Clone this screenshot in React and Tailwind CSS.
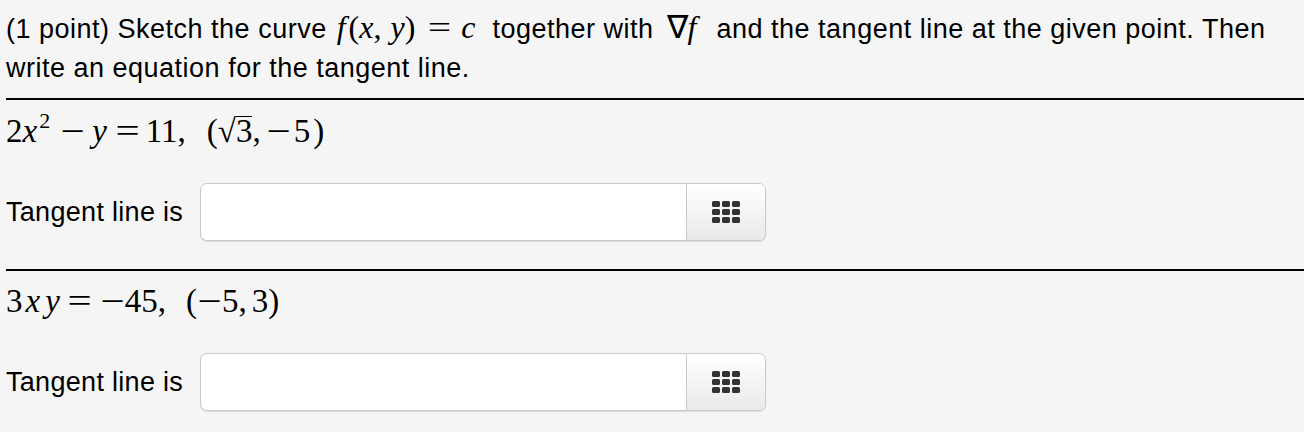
import React from 'react';

// Math bits are set in a Times-style serif, prose in a Helvetica-style sans.
const serif = "font-['Liberation_Serif','Times_New_Roman',serif] tracking-normal";

// Relation / binary operator glyphs are widened to the TeX proportions.
function Op({ children, className = '' }) {
  return (
    <span className={`inline-block w-[25px] text-center scale-x-[1.3] ${className}`}>{children}</span>
  );
}

function GridIcon() {
  const cells = [];
  for (let r = 0; r < 3; r++) {
    for (let c = 0; c < 3; c++) {
      cells.push(<rect key={`${r}-${c}`} x={c * 10} y={r * 8} width="8" height="6" rx="1.5" fill="#333" />);
    }
  }
  return (
    <svg width="28" height="22" viewBox="0 0 28 22">
      {cells}
    </svg>
  );
}

function AnswerRow() {
  return (
    <div className="flex items-center">
      <span className="text-[27px] tracking-[0.3px] leading-none">Tangent line is</span>
      <div className="ml-[17px] flex h-[58px] w-[566px] rounded-[7px] border border-[#c9c9c9] bg-white shadow-[0_1px_1px_rgba(0,0,0,0.1)]">
        <div className="flex-1" />
        <div className="flex w-[79px] items-center justify-center rounded-r-[6px] border-l border-[#c9c9c9] bg-gradient-to-b from-white to-[#e9e9e9]">
          <GridIcon />
        </div>
      </div>
    </div>
  );
}

export default function App() {
  return (
    <div className="min-h-screen bg-[#f5f5f5] pl-[6px] pt-[10px] text-black font-['Liberation_Sans',Arial,sans-serif]">
      <p className="text-[27px] leading-[39px] tracking-[0.5px]">
        (1 point) Sketch the curve{' '}
        <span className={`${serif} ml-[2px] text-[32px] leading-none`}>
          <i className="mr-[3px]">f</i>(<i>x</i>,<i className="ml-[9px]">y</i>)
          <Op className="ml-[12px] mr-[9px]">=</Op>
          <i>c</i>
        </span>{' '}
        <span className="ml-[9px]">together with</span>{' '}
        <span className={`${serif} ml-[5px] text-[32px] leading-none`}>
          ∇<i>f</i>
        </span>{' '}
        <span className="ml-[12px]">and the tangent line at the given point. Then</span>
        <br />
        write an equation for the tangent line.
      </p>

      <hr className="mt-[10px] border-0 border-t-2 border-black" />

      <div className={`${serif} mt-[11px] text-[33px] leading-[40px]`}>
        2<i>x</i>
        <sup className="relative -top-[14px] ml-[2px] text-[22px]">2</sup>
        <Op className="ml-[10px]">−</Op>
        <i className="ml-[7px]">y</i>
        <Op className="ml-[8px]">=</Op>
        <span className="ml-[6px]">11,</span>
        <span className="ml-[21px]">(</span>
        <span>√</span>
        <span className="inline-block border-t-[1.5px] border-black leading-[28px]">3</span>,
        <Op className="ml-[5px]">−</Op>
        <span className="ml-[3px]">5</span>
        <span className="ml-[3px]">)</span>
      </div>

      <div className="mt-[32px]">
        <AnswerRow />
      </div>

      <hr className="mt-[28px] border-0 border-t-2 border-black" />

      <div className={`${serif} mt-[10px] text-[33px] leading-[40px]`}>
        3<i className="ml-[3px]">x</i>
        <i className="ml-[5px]">y</i>
        <Op className="ml-[7px]">=</Op>
        <Op className="ml-[8px]">−</Op>
        45,
        <span className="ml-[20px]">(</span>
        <Op>−</Op>
        5,
        <span className="ml-[5px]">3)</span>
      </div>

      <div className="mt-[32px]">
        <AnswerRow />
      </div>
    </div>
  );
}
